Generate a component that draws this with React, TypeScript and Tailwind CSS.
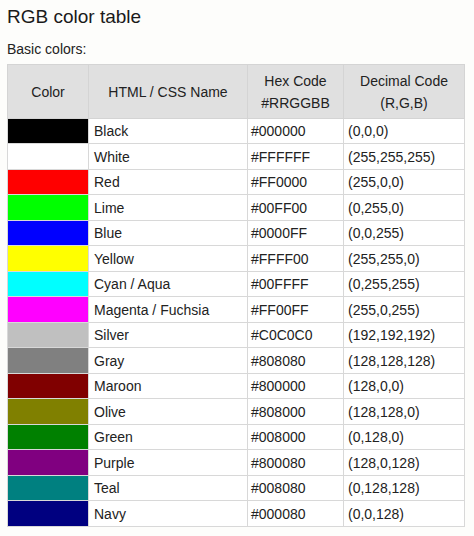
import React from "react";

const rows: [string, string, string, string][] = [
  ["#000000", "Black", "#000000", "(0,0,0)"],
  ["#FFFFFF", "White", "#FFFFFF", "(255,255,255)"],
  ["#FF0000", "Red", "#FF0000", "(255,0,0)"],
  ["#00FF00", "Lime", "#00FF00", "(0,255,0)"],
  ["#0000FF", "Blue", "#0000FF", "(0,0,255)"],
  ["#FFFF00", "Yellow", "#FFFF00", "(255,255,0)"],
  ["#00FFFF", "Cyan / Aqua", "#00FFFF", "(0,255,255)"],
  ["#FF00FF", "Magenta / Fuchsia", "#FF00FF", "(255,0,255)"],
  ["#C0C0C0", "Silver", "#C0C0C0", "(192,192,192)"],
  ["#808080", "Gray", "#808080", "(128,128,128)"],
  ["#800000", "Maroon", "#800000", "(128,0,0)"],
  ["#808000", "Olive", "#808000", "(128,128,0)"],
  ["#008000", "Green", "#008000", "(0,128,0)"],
  ["#800080", "Purple", "#800080", "(128,0,128)"],
  ["#008080", "Teal", "#008080", "(0,128,128)"],
  ["#000080", "Navy", "#000080", "(0,0,128)"],
];

export default function App() {
  return (
    <div
      className="w-[474px] h-[536px] bg-[#fdfdfb] text-[#222222] px-[7px] pt-[5px]"
      style={{ fontFamily: '"Liberation Sans", Arial, sans-serif' }}
    >
      <h1 className="text-[19px] leading-[24px] text-[#1a1a1a]">RGB color table</h1>
      <p className="text-[14px] leading-[18px] mt-[11px]">Basic colors:</p>
      <table className="mt-[6px] border-collapse w-[457px] text-[14px] table-fixed">
        <colgroup>
          <col className="w-[81px]" />
          <col className="w-[159px]" />
          <col className="w-[96px]" />
          <col className="w-[121px]" />
        </colgroup>
        <thead>
          <tr className="bg-[#e0e0e0] h-[54px]">
            <th className="font-normal border border-[#d4d4d4] leading-[22px] text-center">Color</th>
            <th className="font-normal border border-[#d4d4d4] leading-[22px] text-center">HTML / CSS Name</th>
            <th className="font-normal border border-[#d4d4d4] leading-[22px] text-center">
              Hex Code
              <br />
              #RRGGBB
            </th>
            <th className="font-normal border border-[#d4d4d4] leading-[22px] text-center">
              Decimal Code
              <br />
              (R,G,B)
            </th>
          </tr>
        </thead>
        <tbody>
          {rows.map(([c, name, hex, dec], i) => (
            <tr key={name} className={i % 2 === 0 ? "h-[25px]" : "h-[26px]"}>
              <td className="border border-[#d8d8d8] p-0" style={{ backgroundColor: c }}></td>
              <td className="border border-[#d8d8d8] pl-[5px] py-0 leading-[18px] bg-white">{name}</td>
              <td className="border border-[#d8d8d8] pl-[3px] py-0 leading-[18px] bg-white">{hex}</td>
              <td className="border border-[#d8d8d8] pl-[4px] py-0 leading-[18px] bg-white">{dec}</td>
            </tr>
          ))}
        </tbody>
      </table>
    </div>
  );
}
